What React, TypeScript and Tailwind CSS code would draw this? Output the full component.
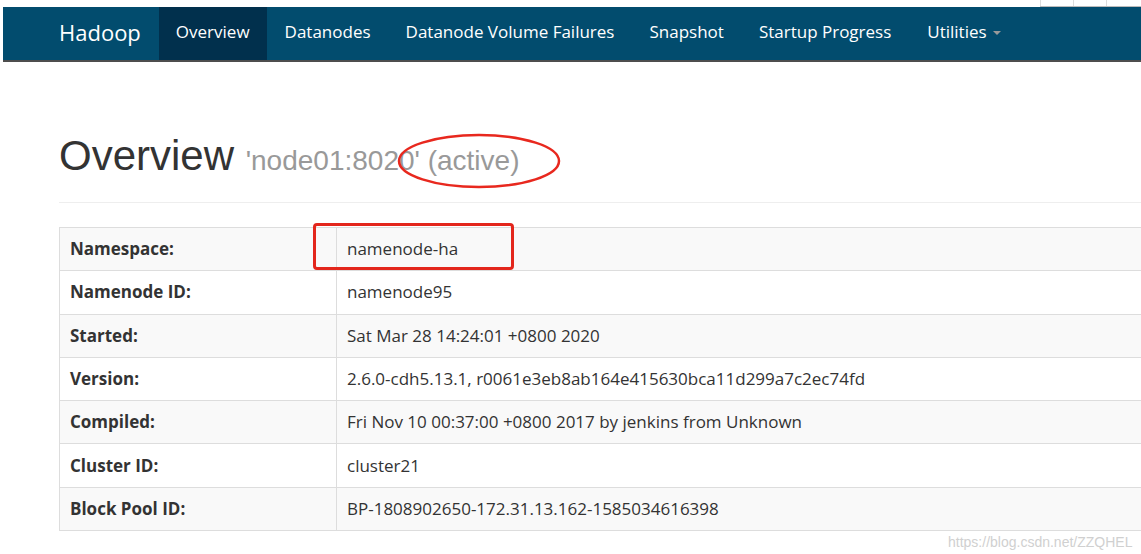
const navItems = ['Datanodes', 'Datanode Volume Failures', 'Snapshot', 'Startup Progress'];

const rows: [string, string][] = [
  ['Namespace:', 'namenode-ha'],
  ['Namenode ID:', 'namenode95'],
  ['Started:', 'Sat Mar 28 14:24:01 +0800 2020'],
  ['Version:', '2.6.0-cdh5.13.1, r0061e3eb8ab164e415630bca11d299a7c2ec74fd'],
  ['Compiled:', 'Fri Nov 10 00:37:00 +0800 2017 by jenkins from Unknown'],
  ['Cluster ID:', 'cluster21'],
  ['Block Pool ID:', 'BP-1808902650-172.31.13.162-1585034616398'],
];

export default function App() {
  return (
    <div className="relative w-[1141px] h-[554px] overflow-hidden bg-white font-['Open_Sans',sans-serif] text-[#333]">
      {/* leftover toolbar boxes at the top right */}
      <div className="absolute top-0 left-[1040px] flex h-[7px] border-b border-[#bbb]">
        <div className="w-[33px] border-l border-[#ddd]" />
        <div className="w-[33px] border-l border-[#ddd]" />
        <div className="w-[35px] border-l border-[#ddd]" />
      </div>

      <nav className="ml-[3px] mt-[7px] h-[55px] bg-[#024c6e] border-b-2 border-[#4d4d4d] flex items-stretch pl-[56px] text-white">
        <div className="flex items-center pr-[18px] pb-[3px] text-[22px]">Hadoop</div>
        <div className="flex items-center px-[17px] pb-[3px] bg-[#01304d] text-[17px]">Overview</div>
        {navItems.map((item) => (
          <div key={item} className="flex items-center pl-[18px] pr-[17px] pb-[3px] text-[17px]">
            {item}
          </div>
        ))}
        <div className="flex items-center pl-[19px] pr-[17px] pb-[3px] text-[17px]">
          Utilities
          <span className="ml-[6px] mt-[2px] border-x-[4px] border-x-transparent border-t-[4px] border-t-[#999]" />
        </div>
      </nav>

      <main className="pl-[59px]">
        <h1 className="mt-[71px] text-[42px] leading-[46px] font-['Liberation_Sans',Arial,sans-serif] text-[#333] whitespace-nowrap">
          Overview <span className="text-[28px] leading-[30px] text-[#999]">'node01:8020' (active)</span>
        </h1>
        <hr className="mt-[23px] border-t border-[#eee] w-[1120px]" />

        <table className="mt-[24px] w-[1120px] border-collapse text-[17px] border border-[#ddd]">
          <tbody>
            {rows.map(([label, value], i) => (
              <tr key={label} className={i % 2 === 0 ? 'bg-[#f9f9f9]' : 'bg-white'}>
                <th className="w-[277px] h-[43.3px] border border-[#ddd] px-[10px] py-[10px] text-left font-bold leading-[22px]">
                  {label}
                </th>
                <td className="border border-[#ddd] px-[10px] py-[10px] leading-[22px]">{value}</td>
              </tr>
            ))}
          </tbody>
        </table>
      </main>

      {/* red annotation marks */}
      <svg className="absolute left-[396px] top-[131px]" width="166" height="60" viewBox="0 0 166 60">
        <ellipse cx="83" cy="30" rx="80" ry="26" fill="none" stroke="#e8281e" strokeWidth="2.5" />
      </svg>
      <div className="absolute left-[313px] top-[223px] w-[201px] h-[47px] border-[3px] border-[#e3261c] rounded-[4px]" />

      <div className="absolute left-[948px] top-[532px] whitespace-nowrap text-[14px] text-[#d0d0d0] font-['Liberation_Sans',Arial,sans-serif]">
        https://blog.csdn.net/ZZQHEL
      </div>
    </div>
  );
}
